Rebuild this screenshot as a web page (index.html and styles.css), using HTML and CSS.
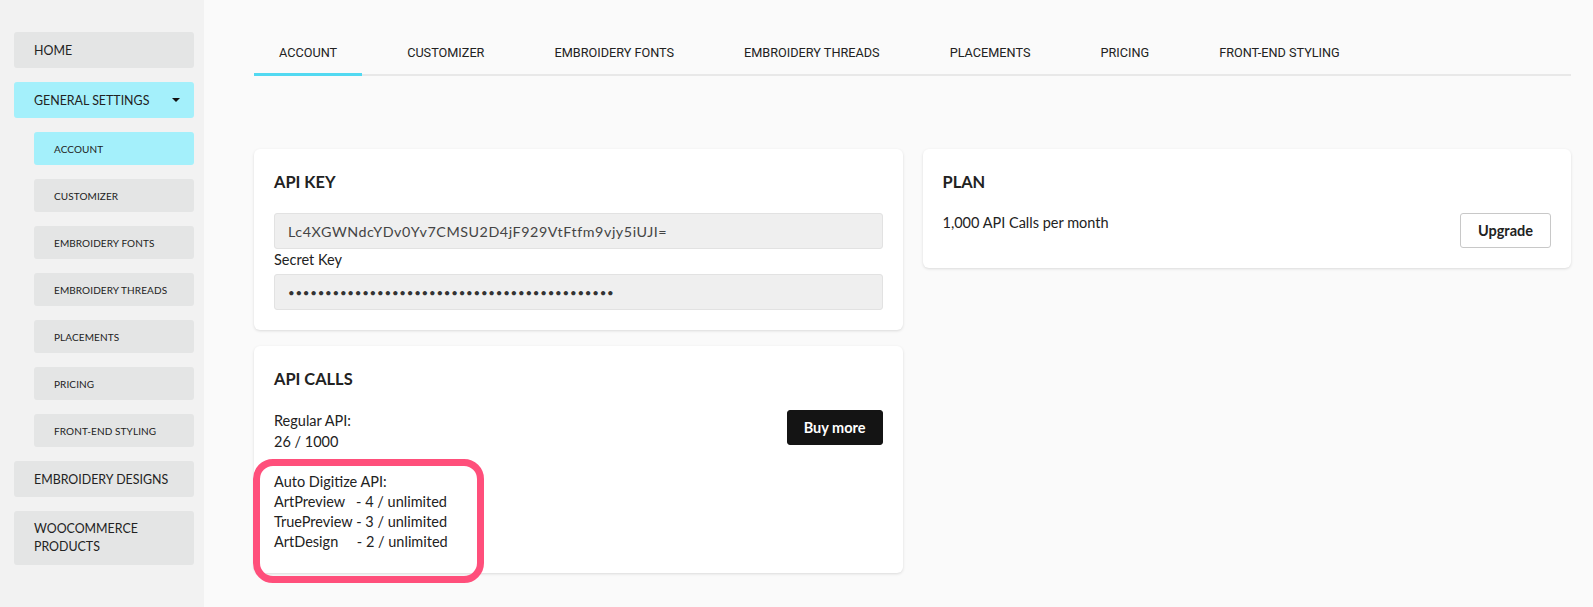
FILE: index.html
```html
<!DOCTYPE html>
<html lang="en">
<head>
    <meta charset="UTF-8">
    <meta name="viewport" content="width=device-width,initial-scale=1.0" />
    <title>General Settings - Account</title>
    <link rel="stylesheet" href="styles.css">
</head>
<body>
    <div class="layout">
        <aside class="sidebar">
            <a class="nav-item" href="#">HOME</a>
            <a class="nav-item nav-item--open" href="#">GENERAL SETTINGS <span class="caret"></span></a>
            <div class="subnav">
                <a class="sub-item sub-item--active" href="#">ACCOUNT</a>
                <a class="sub-item" href="#">CUSTOMIZER</a>
                <a class="sub-item" href="#">EMBROIDERY FONTS</a>
                <a class="sub-item" href="#">EMBROIDERY THREADS</a>
                <a class="sub-item" href="#">PLACEMENTS</a>
                <a class="sub-item" href="#">PRICING</a>
                <a class="sub-item" href="#">FRONT-END STYLING</a>
            </div>
            <a class="nav-item" href="#">EMBROIDERY DESIGNS</a>
            <a class="nav-item nav-item--tall" href="#">WOOCOMMERCE<br>PRODUCTS</a>
        </aside>

        <main class="main">
            <ul class="tabs">
                <li><a class="tab tab--active" href="#">ACCOUNT</a></li>
                <li><a class="tab" href="#">CUSTOMIZER</a></li>
                <li><a class="tab" href="#">EMBROIDERY FONTS</a></li>
                <li><a class="tab" href="#">EMBROIDERY THREADS</a></li>
                <li><a class="tab" href="#">PLACEMENTS</a></li>
                <li><a class="tab" href="#">PRICING</a></li>
                <li><a class="tab" href="#">FRONT-END STYLING</a></li>
            </ul>

            <div class="cards">
                <div class="col">
                    <section class="card">
                        <h2 class="card-title">API KEY</h2>
                        <div class="field field--key">Lc4XGWNdcYDv0Yv7CMSU2D4jF929VtFtfm9vjy5iUJI=</div>
                        <label class="field-label">Secret Key</label>
                        <div class="field field--secret">••••••••••••••••••••••••••••••••••••••••••••</div>
                    </section>

                    <section class="card">
                        <h2 class="card-title">API CALLS</h2>
                        <div class="row">
                            <div class="lines lines--regular">
                                <div>Regular API:</div>
                                <div>26 / 1000</div>
                            </div>
                            <button class="btn btn--dark">Buy more</button>
                        </div>
                        <div class="lines lines--auto">
                            <div>Auto Digitize API:</div>
                            <div>ArtPreview   - 4 / unlimited</div>
                            <div>TruePreview - 3 / unlimited</div>
                            <div>ArtDesign     - 2 / unlimited</div>
                        </div>
                        <div class="highlight"></div>
                    </section>
                </div>

                <div class="col">
                    <section class="card">
                        <h2 class="card-title">PLAN</h2>
                        <div class="row">
                            <div class="lines">
                                <div>1,000 API Calls per month</div>
                            </div>
                            <button class="btn btn--light">Upgrade</button>
                        </div>
                    </section>
                </div>
            </div>
        </main>
    </div>
</body>
</html>
```

FILE: styles.css
```css
body {
    margin: 0;
    background: #fafafa;
    font-family: 'Lato', 'Noto Sans', sans-serif;
    color: #222;
}
a {
    color: inherit;
    text-decoration: none;
}

.layout {
    display: flex;
    height: 100vh;
}

/* sidebar */
.sidebar {
    width: 180px;
    flex-shrink: 0;
    background: #f2f2f2;
    padding: 32px 10px 0 14px;
    display: flex;
    flex-direction: column;
    gap: 14px;
}
.nav-item {
    display: flex;
    align-items: center;
    height: 36px;
    padding: 0 14px 0 20px;
    background: #e4e5e5;
    border-radius: 3px;
    font-size: 12.4px;
}
.nav-item--open {
    background: #a4f0fb;
    justify-content: space-between;
}
.nav-item--tall {
    height: 54px;
    line-height: 18px;
}
.caret {
    width: 0;
    height: 0;
    border-left: 4px solid transparent;
    border-right: 4px solid transparent;
    border-top: 4px solid #111;
}
.subnav {
    display: flex;
    flex-direction: column;
    gap: 14px;
    padding-left: 20px;
}
.sub-item {
    display: flex;
    align-items: center;
    height: 33px;
    padding-left: 20px;
    background: #e4e5e5;
    border-radius: 3px;
    font-size: 10px;
    letter-spacing: 0.1px;
}
.sub-item--active {
    background: #a4f0fb;
}

/* main */
.main {
    flex: 1;
    padding: 32px 22px 0 50px;
}
.tabs {
    list-style: none;
    margin: 0;
    padding: 0;
    display: flex;
    gap: 20px;
    border-bottom: 2px solid #e8e8e8;
}
.tab {
    display: block;
    padding: 13px 25px 12px;
    line-height: 16px;
    font-family: 'Roboto', 'Noto Sans', sans-serif;
    font-size: 12.7px;
    color: #222;
    border-bottom: 3px solid transparent;
    margin-bottom: -2px;
}
.tab--active {
    border-bottom-color: #52d9f1;
}

.cards {
    margin-top: 73px;
    display: grid;
    grid-template-columns: 1fr 1fr;
    gap: 20px;
    align-items: start;
}
.col {
    display: flex;
    flex-direction: column;
    gap: 16px;
}
.card {
    position: relative;
    background: #fff;
    border-radius: 6px;
    box-shadow: 0 1px 3px rgba(0, 0, 0, 0.13);
    padding: 23px 20px 20px;
    font-size: 14.5px;
}
.card-title {
    margin: 0 0 21px;
    font-size: 16.4px;
    font-weight: 700;
    line-height: 20px;
    color: #222;
}
.field {
    height: 36px;
    box-sizing: border-box;
    padding: 0 13px;
    display: flex;
    align-items: center;
    background: #efefef;
    border: 1px solid #e2e2e2;
    border-radius: 3px;
    font-size: 14.3px;
    color: #444;
}
.field--key {
    letter-spacing: 0.55px;
}
.field--secret {
    font-size: 11.5px;
    letter-spacing: 0.75px;
    color: #333;
}
.field-label {
    display: block;
    line-height: 20px;
    margin: 1px 0 4px;
}
.row {
    display: flex;
    justify-content: space-between;
    align-items: flex-start;
}
.lines {
    line-height: 20px;
}
.lines div {
    white-space: pre;
}
.lines--regular {
    line-height: 21px;
}
.lines--auto {
    margin-top: 20px;
    padding-bottom: 1px;
}
.btn {
    font: inherit;
    font-weight: 700;
    font-size: 14.5px;
    height: 35px;
    padding: 0 16px;
    border-radius: 3px;
    cursor: pointer;
}
.btn--dark {
    background: #141414;
    border: 1px solid #141414;
    color: #fff;
    padding: 0 16px;
}
.btn--light {
    background: #fff;
    border: 1px solid #c8c8c8;
    color: #222;
    padding: 0 17px;
}

/* annotation frame drawn over the card */
.highlight {
    position: absolute;
    left: -1px;
    top: 113px;
    width: 231px;
    height: 124px;
    box-sizing: border-box;
    border: 7px solid #ff4f7b;
    border-radius: 20px;
}
```
